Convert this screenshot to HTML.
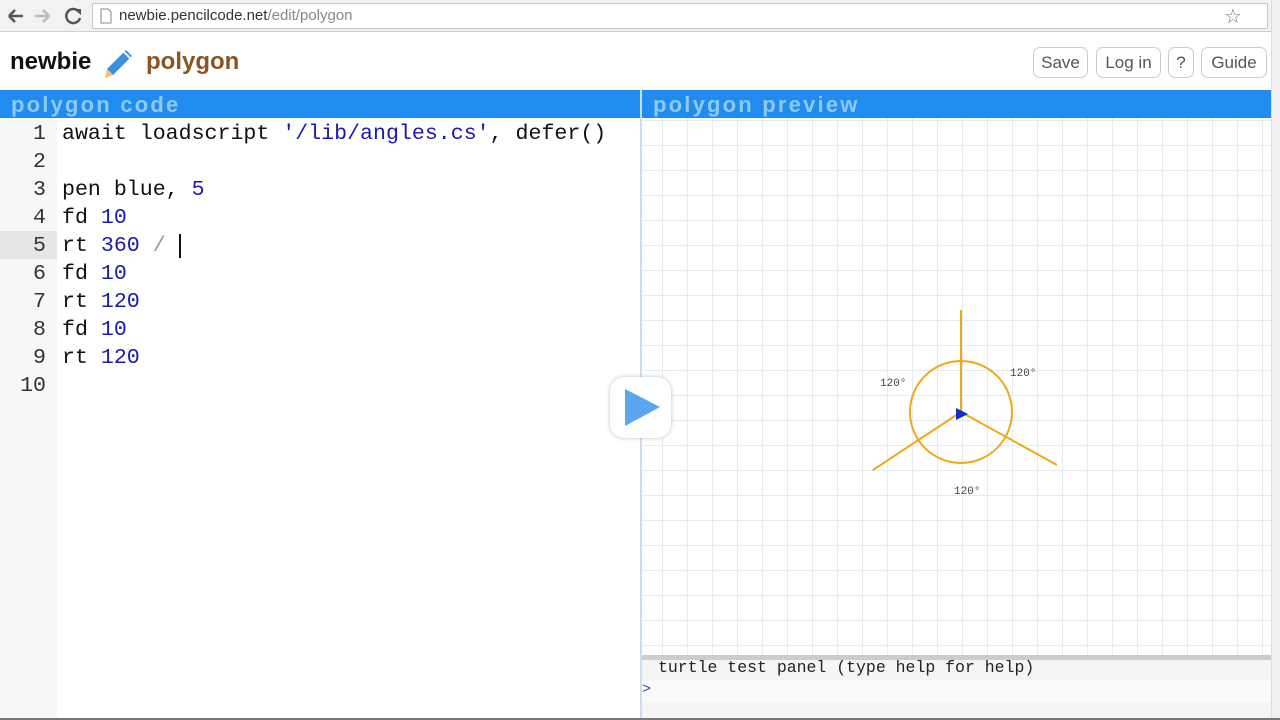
<!DOCTYPE html>
<html><head><meta charset="utf-8"><style>
*{margin:0;padding:0;box-sizing:border-box}
body{width:1280px;height:720px;overflow:hidden;background:#fff;font-family:"Liberation Sans",sans-serif;position:relative}
.abs{position:absolute}
#chrome{left:0;top:0;width:1280px;height:32px;background:#f2f2f2;border-bottom:1px solid #d0d0d0}
#url{left:92px;top:3px;width:1176px;height:26px;background:#fff;border:1px solid #c8c8c8;border-radius:2px;font-size:15px;line-height:24px;padding-left:26px;color:#333}
.btn{top:47px;height:31px;border:1px solid #ccc;border-radius:7px;font-size:17px;line-height:29px;color:#555;text-align:center;background:#fff}
.hdr{top:90px;height:28px;background:#218cf0;color:#8ccaf2;font-size:22px;line-height:29px;letter-spacing:2.2px;padding-left:11px;font-weight:bold}
.code{font-family:"Liberation Mono",monospace;font-size:21.6px;line-height:28px}
.n{color:#1a1ab0}
.s{color:#1a1ab0}
</style></head><body>
<div id="chrome" class="abs"></div>
<svg class="abs" style="left:6px;top:6px" width="80" height="20" viewBox="0 0 80 20">
<path d="M3 10h14M3 10l6-6M3 10l6 6" stroke="#555" stroke-width="2.5" fill="none"/>
<path d="M29 10h14M43 10l-6-6M43 10l-6 6" stroke="#bbb" stroke-width="2.5" fill="none"/>
<path d="M73 6a7 7 0 1 0 1 6" stroke="#555" stroke-width="2.5" fill="none"/><path d="M68 3l7 0 0 6z" fill="#555"/>
</svg>
<div id="url" class="abs">newbie.pencilcode.net<span style="color:#888">/edit/polygon</span></div>
<svg class="abs" style="left:100px;top:8px" width="12" height="16"><path d="M1 1h7l3 3v11H1z" fill="none" stroke="#888"/></svg>
<div class="abs" style="left:1224px;top:4px;font-size:20px;color:#777">☆</div>
<div class="abs" style="left:1271px;top:0;width:9px;height:720px;background:#f0f0f0;border-left:1px solid #ddd"></div>
<div class="abs" style="left:10px;top:48px;font-size:24px;font-weight:bold;color:#111">newbie</div>
<svg class="abs" style="left:101px;top:44px" width="36" height="36" viewBox="0 0 36 36">
<path d="M6 25L25 6l6 6-19 19z" fill="#3c8fe0"/><path d="M6 25l6 6-8 3z" fill="#f0c070"/><path d="M23 8l6 6" stroke="#fff" stroke-width="2"/>
</svg>
<div class="abs" style="left:146px;top:48px;font-size:24px;font-weight:bold;color:#8a5520">polygon</div>
<div class="abs btn" style="left:1033px;width:55px">Save</div>
<div class="abs btn" style="left:1096px;width:65px">Log in</div>
<div class="abs btn" style="left:1168px;width:26px">?</div>
<div class="abs btn" style="left:1201px;width:66px">Guide</div>
<div class="abs hdr" style="left:0;width:640px">polygon code</div>
<div class="abs hdr" style="left:642px;width:629px">polygon preview</div>
<div class="abs" style="left:640px;top:90px;width:2px;height:630px;background:#cde"></div>
<div class="abs" style="left:0;top:118px;width:57px;height:602px;background:#f7f7f7"></div>
<div class="abs" style="left:0;top:231px;width:57px;height:28px;background:#e6e6e6"></div>
<div class="abs code" style="left:0;top:120px;width:46px;text-align:right;color:#333">1<br>2<br>3<br>4<br>5<br>6<br>7<br>8<br>9<br>10</div>
<div class="abs code" style="left:62px;top:120px;color:#111;white-space:pre">await loadscript <span class="s">'/lib/angles.cs'</span>, defer()

pen blue, <span class="n">5</span>
fd <span class="n">10</span>
rt <span class="n">360</span> <span style="color:#999">/</span> <span style="border-left:2px solid #111"></span>
fd <span class="n">10</span>
rt <span class="n">120</span>
fd <span class="n">10</span>
rt <span class="n">120</span></div>
<div class="abs" style="left:642px;top:118px;width:629px;height:537px;background-color:#fff;background-image:linear-gradient(to right,#e4ebf1 1px,transparent 1px),linear-gradient(to bottom,#e4ebf1 1px,transparent 1px);background-size:25px 25px;background-position:20px 2px"></div>
<svg class="abs" style="left:642px;top:118px" width="629" height="537">
<g stroke="#f0a818" stroke-width="2" fill="none">
<path d="M319 192v102M319 294L231 352M319 294L415 347"/>
<circle cx="319" cy="294" r="51"/>
</g>
<path d="M314 290l12 6-12 6z" fill="#1030c0"/>
<g font-family="Liberation Mono,monospace" font-size="11" fill="#444">
<text x="238" y="268">120°</text><text x="368" y="258">120°</text><text x="312" y="376">120°</text></g>
</svg>
<div class="abs" style="left:610px;top:377px;width:61px;height:61px;border-radius:14px;background:#fff;box-shadow:0 0 4px rgba(0,0,0,.25)"></div>
<svg class="abs" style="left:624px;top:387px" width="40" height="42"><path d="M1 2L36 20L1 39z" fill="#5aa6f0"/></svg>
<div class="abs" style="left:642px;top:655px;width:629px;height:5px;background:#ccc"></div>
<div class="abs" style="left:642px;top:660px;width:629px;height:58px;background:#f5f5f5"></div>
<div class="abs" style="left:642px;top:680px;width:629px;height:22px;background:#fafafa"></div>
<div class="abs" style="left:658px;top:658px;font-family:'Liberation Mono',monospace;font-size:16.5px;color:#222">turtle test panel (type help for help)</div>
<div class="abs" style="left:642px;top:681px;font-family:'Liberation Mono',monospace;font-size:15px;color:#44a">&gt;</div>
<div class="abs" style="left:0;top:718px;width:1280px;height:2px;background:#777"></div>
</body></html>
